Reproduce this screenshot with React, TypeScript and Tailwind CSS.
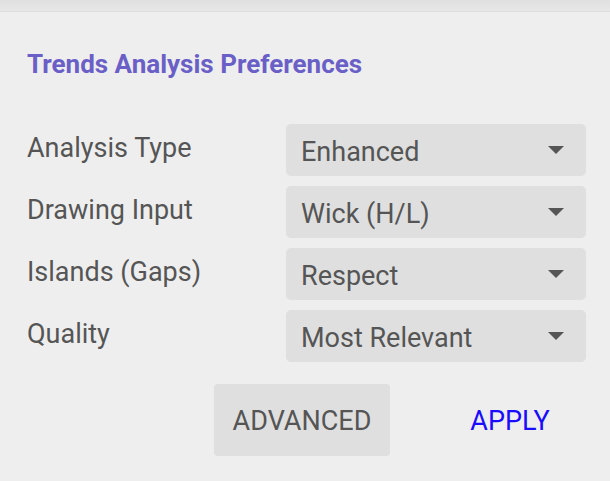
const rows = [
  { label: 'Analysis Type', value: 'Enhanced' },
  { label: 'Drawing Input', value: 'Wick (H/L)' },
  { label: 'Islands (Gaps)', value: 'Respect' },
  { label: 'Quality', value: 'Most Relevant' },
]

function Caret() {
  return (
    <svg className="h-[8px] w-[16px]" viewBox="0 0 16 8" fill="#555555">
      <path d="M0 0h16L8 8z" />
    </svg>
  )
}

export default function App() {
  return (
    <div className="h-[481px] w-[610px] overflow-hidden bg-[#eeeeee] font-['Roboto',sans-serif] text-[#555555]">
      <div className="h-[12px] border-b border-[#dcdcdc] bg-gradient-to-b from-[#e0e0e0] to-[#e7e7e7]" />

      <div className="pl-[27px] pr-[24px]">
        <h1 className="mt-[34px] text-[26px] font-bold leading-[36px] text-[#6a5fc7]">Trends Analysis Preferences</h1>

        <div className="mt-[42px] grid grid-cols-[1fr_300px] gap-y-[10px]">
          {rows.map(({ label, value }) => (
            <div key={label} className="contents">
              <div className="pt-[6px] text-[27px] leading-[36px]">{label}</div>
              <div className="flex h-[52px] items-center justify-between rounded-[5px] bg-[#dfdfdf] pl-[15px] pr-[22px]">
                <span className="pt-[3px] text-[27px] leading-[36px]">{value}</span>
                <Caret />
              </div>
            </div>
          ))}
        </div>

        <div className="mt-[22px] flex justify-end">
          <button
            type="button"
            className="flex h-[72px] w-[176px] items-center justify-center rounded-[4px] bg-[#dfdfdf] pt-[3px] text-[27px] text-[#555555]"
          >
            ADVANCED
          </button>
          <button
            type="button"
            className="ml-[44px] flex h-[72px] w-[152px] items-center justify-center pt-[3px] text-[27px] text-[#1a0dff]"
          >
            APPLY
          </button>
        </div>
      </div>
    </div>
  )
}
